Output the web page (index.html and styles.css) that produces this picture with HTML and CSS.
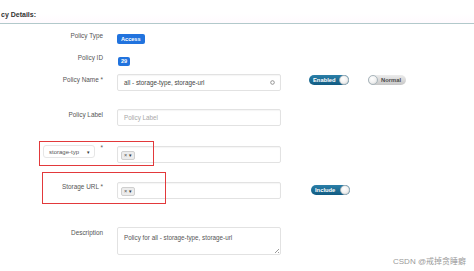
FILE: index.html
```html
<!DOCTYPE html>
<html lang="en">
<head>
    <meta charset="UTF-8">
    <title>Policy Details</title>
    <link rel="stylesheet" href="styles.css">
</head>
<body>
    <div class="section-title"><span>cy Details:</span></div>

    <div class="form">
        <div class="row row-badge">
            <div class="label">Policy Type</div>
            <div class="control"><span class="badge">Access</span></div>
        </div>

        <div class="row row-badge row-id">
            <div class="label">Policy ID</div>
            <div class="control"><span class="badge badge-small">29</span></div>
        </div>

        <div class="row row-name">
            <div class="label">Policy Name *</div>
            <div class="control">
                <div class="input">
                    <span class="value">all - storage-type, storage-url</span>
                    <svg class="info" width="5" height="5" viewBox="0 0 5 5"><circle cx="2.5" cy="2.5" r="1.8" fill="none" stroke="#8a8a8a" stroke-width="0.9"/></svg>
                </div>
            </div>
            <div class="toggle toggle-on toggle-enabled"><span class="toggle-text">Enabled</span><span class="knob"></span></div>
            <div class="toggle toggle-off"><span class="knob"></span><span class="toggle-text">Normal</span></div>
        </div>

        <div class="row row-label">
            <div class="label">Policy Label</div>
            <div class="control">
                <div class="input"><span class="placeholder">Policy Label</span></div>
            </div>
        </div>

        <div class="row row-type">
            <div class="label label-select">
                <div class="select">storage-typ <span class="caret">▾</span></div>
                <span class="star">*</span>
            </div>
            <div class="control">
                <div class="input"><span class="tag">× <span class="caret">▾</span></span></div>
            </div>
            <div class="mark mark-type"></div>
        </div>

        <div class="row row-url">
            <div class="label label-url">Storage URL *</div>
            <div class="control">
                <div class="input"><span class="tag">× <span class="caret">▾</span></span></div>
            </div>
            <div class="toggle toggle-on toggle-include"><span class="toggle-text">Include</span><span class="knob"></span></div>
            <div class="mark mark-url"></div>
        </div>

        <div class="row row-desc">
            <div class="label">Description</div>
            <div class="control">
                <div class="textarea">Policy for all - storage-type, storage-url<span class="grip"></span></div>
            </div>
        </div>
    </div>

    <div class="watermark">CSDN @戒掉贪睡癖</div>
</body>
</html>
```

FILE: styles.css
```css
* {
    margin: 0;
    padding: 0;
    box-sizing: border-box;
}

body {
    font-family: 'Liberation Sans', Arial, sans-serif;
    background: #fff;
    width: 474px;
    height: 271px;
    overflow: hidden;
    position: relative;
    color: #555;
}

.section-title {
    height: 24px;
    padding-top: 11px;
    border-bottom: 1px solid #b2c9cb;
    background: linear-gradient(to bottom, #fff 0%, #fff 60%, #fffafe 100%);
    font-size: 7px;
    line-height: 8px;
    font-weight: bold;
    color: #333;
}

.section-title span {
    display: block;
    padding-left: 1px;
}

.form {
    padding-top: 7px;
}

.row {
    display: flex;
    align-items: flex-start;
    position: relative;
}

.row-badge {
    align-items: center;
    height: 10px;
}

.row-id { margin-top: 12px; }
.row-name { margin-top: 11px; }
.row-label { margin-top: 18px; }
.row-type { margin-top: 20px; }
.row-url { margin-top: 19px; }
.row-desc { margin-top: 28px; }

.label {
    width: 103px;
    text-align: right;
    font-size: 6.4px;
    line-height: 8px;
    color: #555;
    flex-shrink: 0;
}

.row .label { padding-top: 2px; }
.row-badge .label { padding-top: 0; }
.row-url .label { padding-top: 1px; }

.control {
    margin-left: 14px;
}

.badge {
    display: inline-block;
    height: 10px;
    padding: 0 4px;
    background: #2173de;
    border-radius: 2px;
    color: #fff;
    font-size: 5.6px;
    line-height: 10px;
    font-weight: bold;
}

.badge-small {
    height: 9px;
    line-height: 9px;
    padding: 0 3px;
    margin-left: 1px;
}

.input {
    width: 164px;
    height: 17px;
    border: 1px solid #e2e2e2;
    border-radius: 2px;
    box-shadow: inset 0 1px 1px rgba(0, 0, 0, 0.04);
    display: flex;
    align-items: center;
    padding: 0 5px 0 6px;
    font-size: 6.3px;
    color: #444;
}

.value {
    flex: 1;
}

.placeholder {
    color: #a8a8a8;
}

.info {
    display: block;
}

.toggle {
    height: 10px;
    border-radius: 5px;
    display: flex;
    align-items: center;
    font-size: 5.8px;
    font-weight: bold;
    margin-top: 1px;
}

.toggle-on {
    background: linear-gradient(to bottom, #2a7fa8, #115b82);
    color: #fff;
    padding-left: 4px;
    justify-content: space-between;
}

.toggle-off {
    background: linear-gradient(to bottom, #ececec, #c6c6c6);
    color: #4a4a4a;
    padding-right: 5px;
}

.toggle-enabled {
    width: 40px;
    margin-left: 28px;
}

.toggle-off {
    width: 38px;
    margin-left: 19px;
}

.toggle-include {
    width: 39px;
    margin-left: 30px;
    margin-top: 3px;
}

.toggle-off .toggle-text {
    margin-left: auto;
}

.knob {
    width: 10px;
    height: 10px;
    border-radius: 50%;
    background: radial-gradient(circle at 40% 35%, #fff 0%, #f2f2f2 50%, #cfcfcf 100%);
    border: 1px solid #a9b6bd;
}

.label-select {
    display: flex;
    align-items: flex-start;
    padding-top: 0 !important;
    margin-top: -1px;
    padding-left: 43px;
}

.select {
    width: 52px;
    height: 13px;
    border: 1px solid #e6e6e6;
    border-radius: 3px;
    display: flex;
    align-items: center;
    justify-content: space-between;
    padding: 0 4px 0 5px;
    font-size: 6px;
    color: #555;
    text-align: left;
}

.caret {
    font-size: 5px;
    color: #333;
}

.star {
    margin-left: 6px;
    font-size: 6.4px;
    line-height: 6px;
}

.tag {
    display: inline-flex;
    align-items: center;
    height: 9px;
    padding: 0 2px;
    margin-left: -3px;
    margin-top: 1px;
    background: #ececec;
    border: 1px solid #cfcfcf;
    border-radius: 2px;
    font-size: 5.5px;
    color: #555;
    gap: 2px;
}

.tag .caret {
    font-size: 4.5px;
}

.mark {
    position: absolute;
    border: 1.5px solid #e2393b;
}

.mark-type {
    left: 39px;
    top: -5px;
    width: 115px;
    height: 25px;
}

.mark-url {
    left: 42px;
    top: -10px;
    width: 124px;
    height: 32px;
}

.textarea {
    position: relative;
    width: 164px;
    height: 28px;
    border: 1px solid #e2e2e2;
    border-radius: 2px;
    padding: 6px 6px;
    font-size: 6.3px;
    line-height: 8px;
    color: #555;
}

.grip {
    position: absolute;
    right: 1px;
    bottom: 1px;
    width: 4px;
    height: 4px;
    background: linear-gradient(135deg, transparent 45%, #999 46%, #999 56%, transparent 57%, transparent 75%, #999 76%);
}

.watermark {
    position: absolute;
    left: 393px;
    top: 257px;
    font-family: 'Liberation Sans', 'Noto Sans CJK SC', sans-serif;
    font-size: 8px;
    line-height: 10px;
    color: #9a9a9a;
}
```
